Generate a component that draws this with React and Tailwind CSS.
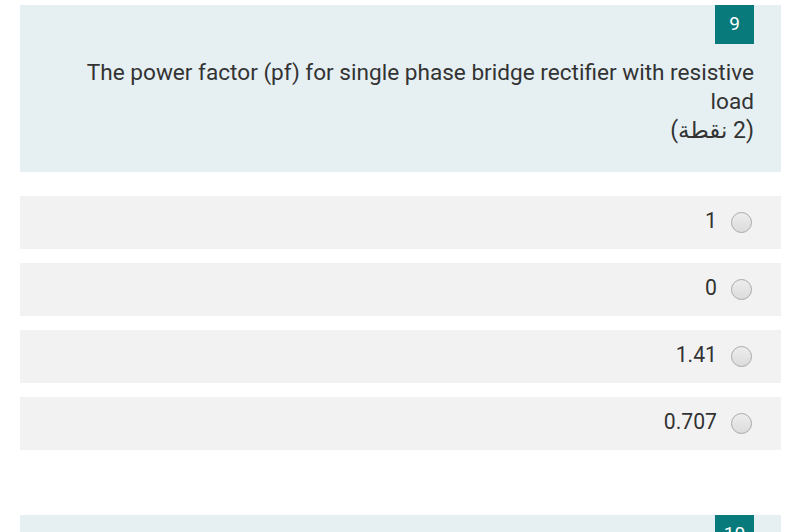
const options = ["1", "0", "1.41", "0.707"];

function Radio() {
  return (
    <span className="w-[21px] h-[21px] rounded-full border border-[#a9a9a9] bg-gradient-to-b from-[#ededed] to-[#dcdcdc] shrink-0" />
  );
}

function QuestionHeader({ num, children }) {
  return (
    <div className="bg-[#e6f0f3] pr-[27px] pb-[27px] flex flex-col items-end">
      <div className="w-[39px] h-[39px] bg-[#097a7b] text-white text-[19px] flex items-center justify-center">
        {num}
      </div>
      {children}
    </div>
  );
}

export default function App() {
  return (
    <div
      className="w-[800px] h-[532px] overflow-hidden bg-white pt-[5px] pl-5 pr-[19px] text-[#333]"
      style={{ fontFamily: "Roboto, 'Noto Sans', 'DejaVu Sans', sans-serif" }}
    >
      <QuestionHeader num="9">
        <div className="mt-[14px] text-right text-[22.6px] leading-[29px] pl-16">
          The power factor (pf) for single phase bridge rectifier with resistive load
          <div dir="rtl" className="text-right text-[23px]">
            (2 نقطة)
          </div>
        </div>
      </QuestionHeader>

      <div className="mt-[24px] flex flex-col gap-[14px]">
        {options.map((o) => (
          <div key={o} className="h-[53px] bg-[#f2f2f2] flex items-center justify-end pr-[29px] gap-[14px]">
            <span className="text-[21.2px] leading-none -mt-[4px]">{o}</span>
            <Radio />
          </div>
        ))}
      </div>

      <div className="mt-[65px]">
        <QuestionHeader num="10" />
      </div>
    </div>
  );
}
